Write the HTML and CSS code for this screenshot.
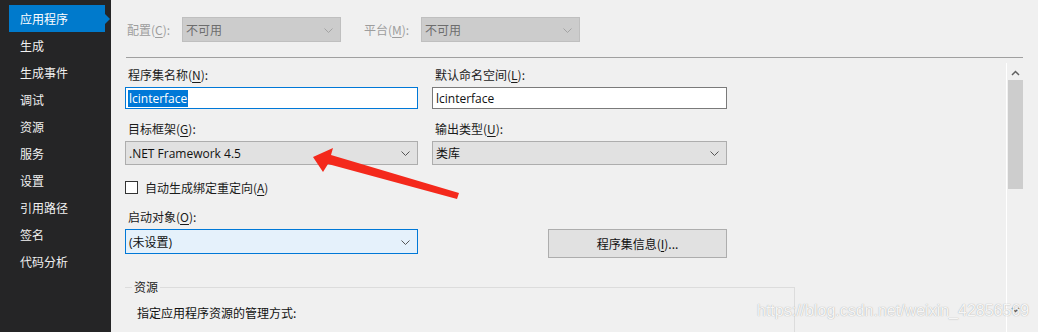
FILE: index.html
```html
<!DOCTYPE html>
<html lang="zh-CN">
<head>
<meta charset="utf-8">
<title>应用程序</title>
<link rel="stylesheet" href="styles.css">
</head>
<body>
<nav class="sidebar">
  <div class="nav-item active">应用程序</div>
  <div class="nav-item">生成</div>
  <div class="nav-item">生成事件</div>
  <div class="nav-item">调试</div>
  <div class="nav-item">资源</div>
  <div class="nav-item">服务</div>
  <div class="nav-item">设置</div>
  <div class="nav-item">引用路径</div>
  <div class="nav-item">签名</div>
  <div class="nav-item">代码分析</div>
</nav>
<main class="main">
  <div class="topbar">
    <span class="top-label lbl-config">配置(<u>C</u>):</span>
    <div class="select disabled"><span>不可用</span><svg class="chev" width="9" height="5" viewBox="0 0 9 5"><polyline points="0.5,0.5 4.5,4.5 8.5,0.5" /></svg></div>
    <span class="top-label lbl-platform">平台(<u>M</u>):</span>
    <div class="select disabled"><span>不可用</span><svg class="chev" width="9" height="5" viewBox="0 0 9 5"><polyline points="0.5,0.5 4.5,4.5 8.5,0.5" /></svg></div>
  </div>
  <div class="divider"></div>
  <div class="body">
    <div class="content">
      <div class="row">
        <div class="field">
          <label class="label">程序集名称(<u>N</u>):</label>
          <div class="textbox focused"><span class="sel">lcinterface</span></div>
        </div>
        <div class="field">
          <label class="label">默认命名空间(<u>L</u>):</label>
          <div class="textbox"><span class="val">lcinterface</span></div>
        </div>
      </div>
      <div class="row row2">
        <div class="field">
          <label class="label">目标框架(<u>G</u>):</label>
          <div class="select normal"><span>.NET Framework 4.5</span><svg class="chev" width="9" height="5" viewBox="0 0 9 5"><polyline points="0.5,0.5 4.5,4.5 8.5,0.5" /></svg></div>
        </div>
        <div class="field">
          <label class="label">输出类型(<u>U</u>):</label>
          <div class="select normal"><span>类库</span><svg class="chev" width="9" height="5" viewBox="0 0 9 5"><polyline points="0.5,0.5 4.5,4.5 8.5,0.5" /></svg></div>
        </div>
      </div>
      <div class="check-row">
        <span class="checkbox"></span>
        <span class="check-label">自动生成绑定重定向(<u>A</u>)</span>
      </div>
      <div class="row row3">
        <div class="field">
          <label class="label">启动对象(<u>O</u>):</label>
          <div class="select hot"><span>(未设置)</span><svg class="chev" width="9" height="5" viewBox="0 0 9 5"><polyline points="0.5,0.5 4.5,4.5 8.5,0.5" /></svg></div>
        </div>
        <div class="field field-btn">
          <button class="button">程序集信息(<u>I</u>)...</button>
        </div>
      </div>
      <fieldset class="group">
        <legend class="group-title">资源</legend>
        <div class="group-text">指定应用程序资源的管理方式:</div>
      </fieldset>
    </div>
    <div class="scrollbar">
      <svg class="sb-arrow" width="9" height="6" viewBox="0 0 9 6"><polyline points="1,5 4.5,1.5 8,5" /></svg>
      <div class="thumb"></div>
      <svg class="sb-arrow down" width="9" height="6" viewBox="0 0 9 6"><polyline points="1,1 4.5,4.5 8,1" /></svg>
    </div>
  </div>
</main>
<svg class="red-arrow" width="1038" height="332" viewBox="0 0 1038 332">
  <polygon points="313,157 333,148 331,155 459,193 457,199 328,164 323,172" />
</svg>
<div class="watermark">https://blog.csdn.net/weixin_42856569</div>
</body>
</html>
```
FILE: styles.css
```css
* { box-sizing: border-box; }
html, body {
  margin: 0;
  padding: 0;
  width: 1038px;
  height: 332px;
  overflow: hidden;
}
body {
  display: flex;
  background: #f0f0f0;
  font-family: "Noto Sans CJK SC", "Noto Sans", sans-serif;
  font-size: 12px;
  color: #1b1b1b;
  position: relative;
}
u { text-decoration: underline; text-underline-offset: 2px; }

/* sidebar */
.sidebar {
  width: 111px;
  flex: none;
  background: #252526;
  padding-top: 5px;
}
.nav-item {
  position: relative;
  height: 27px;
  line-height: 27px;
  margin-left: 9px;
  width: 96px;
  padding-left: 11px;
  color: #f1f1f1;
  font-size: 12px;
}
.nav-item.active {
  background: #007acc;
  color: #ffffff;
}
.nav-item.active::after {
  content: "";
  position: absolute;
  right: -5px;
  top: 9px;
  border-top: 5px solid transparent;
  border-bottom: 5px solid transparent;
  border-left: 5px solid #007acc;
}

/* main */
.main {
  flex: 1;
  height: 332px;
  padding: 0 15px 0 14px;
  display: flex;
  flex-direction: column;
  overflow: hidden;
}
.topbar {
  display: flex;
  align-items: center;
  margin-top: 17px;
  height: 25px;
  flex: none;
}
.top-label {
  color: #9d9d9d;
  padding-left: 2px;
}
.lbl-config { width: 57px; }
.lbl-platform { width: 59px; margin-left: 21px; }
.select {
  position: relative;
  display: flex;
  align-items: center;
  padding-left: 3px;
  border: 1px solid #adadad;
  background: #e1e1e1;
  color: #111;
}
.select .chev {
  position: absolute;
  right: 7px;
  top: 50%;
  margin-top: -2px;
}
.chev polyline {
  fill: none;
  stroke: #555;
  stroke-width: 1;
}
.select.disabled {
  width: 159px;
  height: 25px;
  background: #cccccc;
  border-color: #bfbfbf;
  color: #6d6d6d;
}
.select.disabled .chev polyline { stroke: #a3a3a3; }
.select.normal {
  height: 24px;
}
.select.hot {
  background: #e5f1fb;
  border-color: #0078d7;
  height: 25px;
}
.divider {
  flex: none;
  margin-top: 15px;
  margin-left: 1px;
  border-top: 1px solid #a0a0a0;
}

.body {
  flex: 1;
  display: flex;
  margin-top: 5px;
  min-height: 0;
  overflow: hidden;
}
.content {
  flex: 1;
  padding-top: 3px;
  min-width: 0;
  overflow: hidden;
}
.row {
  display: flex;
  gap: 14px;
  width: 602px;
}
.field {
  display: flex;
  flex-direction: column;
}
.field:first-child { width: 293px; }
.field:last-child { width: 295px; }
.label {
  height: 18px;
  line-height: 18px;
  padding-left: 3px;
  margin-bottom: 3px;
  color: #1b1b1b;
}
.textbox {
  height: 22px;
  border: 1px solid #7a7a7a;
  background: #fff;
  display: flex;
  align-items: center;
  padding-left: 2px;
  font-family: "Open Sans", "Noto Sans", sans-serif;
  font-size: 12px;
}
.textbox.focused { border-color: #0078d7; }
.sel {
  background: #0078d7;
  color: #fff;
  line-height: 17px;
  padding: 0 1px;
}
.val { color: #111; padding-left: 1px; }
.select.normal span:first-child, .select.hot span:first-child {
  font-family: "Open Sans", "Noto Sans CJK SC", sans-serif;
}
.row2 { margin-top: 11px; }

.check-row {
  display: flex;
  align-items: center;
  margin-top: 16px;
  height: 13px;
}
.checkbox {
  width: 13px;
  height: 13px;
  border: 1px solid #333;
  background: #fff;
}
.check-label {
  margin-left: 7px;
}
.row3 { margin-top: 14px; }
.field-btn {
  justify-content: flex-end;
  align-items: flex-end;
}
.button {
  width: 179px;
  height: 29px;
  margin-bottom: -4px;
  border: 1px solid #adadad;
  background: #e1e1e1;
  font-family: "Noto Sans CJK SC", sans-serif;
  font-size: 12px;
  color: #111;
  padding: 0;
}

.group {
  margin: 25px 0 0 -3px;
  width: 673px;
  height: 60px;
  border: 1px solid #dcdcdc;
  padding: 0 0 0 14px;
}
.group-title {
  padding: 0 2px;
  margin-left: -5px;
  color: #1b1b1b;
  line-height: 16px;
}
.group-text {
  margin-top: 9px;
  color: #111;
}

.scrollbar {
  width: 17px;
  flex: none;
  border-left: 1px solid #ffffff;
  display: flex;
  flex-direction: column;
  align-items: center;
}
.sb-arrow {
  margin-top: 7px;
  flex: none;
}
.sb-arrow polyline {
  fill: none;
  stroke: #606060;
  stroke-width: 1.5;
}
.thumb {
  flex: none;
  margin-top: 4px;
  width: 15px;
  margin-left: 1px;
  height: 109px;
  background: #cdcdcd;
}
.sb-arrow.down {
  margin-top: auto;
  margin-bottom: 19px;
}

.red-arrow {
  position: absolute;
  left: 0;
  top: 0;
  pointer-events: none;
}
.red-arrow polygon { fill: #f4291c; }

.watermark {
  position: absolute;
  left: 757px;
  top: 302px;
  font-family: "Liberation Sans", Arial, sans-serif;
  font-size: 16px;
  color: rgba(255, 255, 255, 0.92);
  text-shadow: 0 0 1px rgba(90, 90, 90, 0.6);
  white-space: nowrap;
  pointer-events: none;
}
```
